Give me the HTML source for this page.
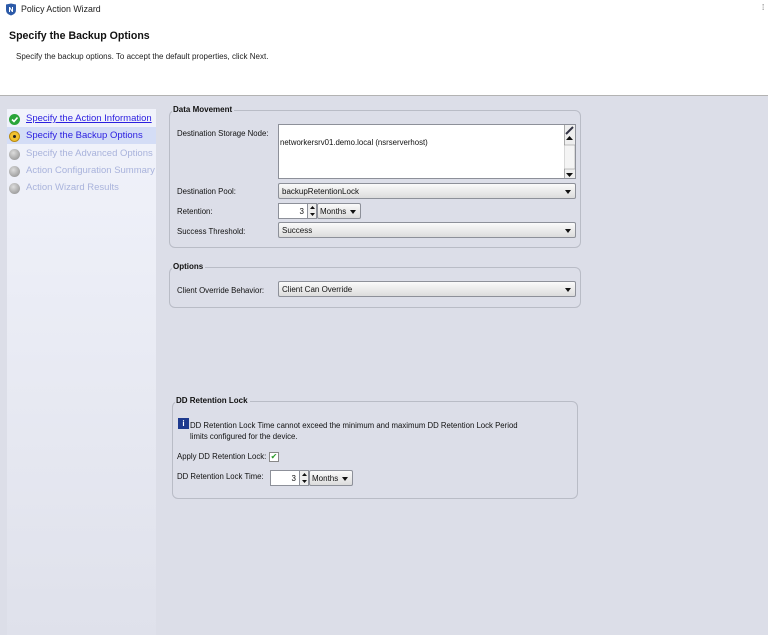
<!DOCTYPE html>
<html><head><style>
*{margin:0;padding:0;box-sizing:border-box}
body{width:768px;height:635px;position:relative;overflow:hidden;background:#dcdee8;font-family:"Liberation Sans",Arial,sans-serif;color:#111}
.a{position:absolute;white-space:nowrap}
.f{font-size:7.8px}
.grp{position:absolute;border:1px solid #b9bcc6;border-radius:6px}
.gt{position:absolute;font-size:8px;font-weight:bold;background:#dcdee8;padding:0 2px 0 1px}
.sel{position:absolute;height:16px;border:1px solid #8d9099;border-radius:2px;background:linear-gradient(#fafafa,#dcdcdc);font-size:8px;padding:3px 0 0 3px}
.sel:after{content:"";position:absolute;right:4px;top:6px;border-left:3.5px solid transparent;border-right:3.5px solid transparent;border-top:4px solid #111}
.inp{position:absolute;height:16px;border:1px solid #8d9099;background:#fff;font-size:8px;text-align:right;padding:3px 12px 0 0}
.spin{position:absolute;right:0;top:0;width:9px;height:14px;border-left:1px solid #8d9099;background:#eee}
.li{position:absolute;left:10px;font-size:9.5px;white-space:nowrap}
.dot{position:absolute;left:-1px;top:1px;width:11px;height:11px;border-radius:50%}
</style></head><body>
<div class="a" style="left:0;top:0;width:768px;height:96px;background:#fff;border-bottom:1px solid #b3b3b3"></div>
<svg class="a" style="left:5px;top:3px" width="12" height="13" viewBox="0 0 12 13"><path d="M1 1.5 L6 0.5 L11 1.5 L11 7 Q11 11 6 12.5 Q1 11 1 7Z" fill="#2c5aa8"/><path d="M4 9V4h1l2 3V4h1v5H7L5 6v3z" fill="#fff"/></svg>
<div class="a" style="left:21px;top:4px;font-size:8.8px;color:#222">Policy Action Wizard</div>
<div class="a" style="left:762px;top:3px;font-size:8px;color:#555">⁞</div>
<div class="a" style="left:9px;top:30px;font-size:10.6px;font-weight:bold">Specify the Backup Options</div>
<div class="a" style="left:16px;top:52px;font-size:8px;color:#222">Specify the backup options. To accept the default properties, click Next.</div>

<div class="a" style="left:7px;top:109px;width:149px;height:526px;background:linear-gradient(#f1f3fb,#dfe1eb)"></div>
<div class="a" style="left:7px;top:127px;width:149px;height:17px;background:#d4ddf6"></div>
<div class="li" style="top:113px;left:10px"><div class="dot" style="background:#2aa53a"></div><svg style="position:absolute;left:-1px;top:1px" width="11" height="11"><path d="M3 5.5l2 2 3.5-4" stroke="#fff" stroke-width="1.6" fill="none"/></svg><span style="margin-left:16px;color:#2a1ee0;text-decoration:underline">Specify the Action Information</span></div>
<div class="li" style="top:130px"><div class="dot" style="background:#f2c230;border:1px solid #b88a10"></div><span style="position:absolute;left:3px;top:5px;width:3px;height:3px;background:#222;border-radius:50%"></span><span style="margin-left:16px;color:#2a1ee0">Specify the Backup Options</span></div>
<div class="li" style="top:148px"><div class="dot" style="background:radial-gradient(circle at 40% 35%,#ddd,#888)"></div><span style="margin-left:16px;color:#a9b3dc">Specify the Advanced Options</span></div>
<div class="li" style="top:165px"><div class="dot" style="background:radial-gradient(circle at 40% 35%,#ddd,#888)"></div><span style="margin-left:16px;color:#a9b3dc">Action Configuration Summary</span></div>
<div class="li" style="top:182px"><div class="dot" style="background:radial-gradient(circle at 40% 35%,#ddd,#888)"></div><span style="margin-left:16px;color:#a9b3dc">Action Wizard Results</span></div>

<div class="grp" style="left:169px;top:110px;width:412px;height:138px"></div>
<div class="gt" style="left:172px;top:105px">Data Movement</div>
<div class="a f" style="left:177px;top:129px">Destination Storage Node:</div>
<div class="a" style="left:278px;top:124px;width:298px;height:55px;border:1px solid #8d9099;background:#fff"></div>
<div class="a f" style="left:280px;top:138px">networkersrv01.demo.local (nsrserverhost)</div>
<div class="a" style="left:564px;top:125px;width:11px;height:53px;background:#eee;border-left:1px solid #aaa"></div>
<svg class="a" style="left:564px;top:125px" width="11" height="53"><path d="M2 9L9 2" stroke="#334" stroke-width="2"/><path d="M2 15h7L5.5 11z" fill="#111"/><rect x="0" y="20" width="11" height="24" fill="#f4f4f4" stroke="#999" stroke-width=".6"/><path d="M2 48h7L5.5 52z" fill="#111"/></svg>
<div class="a f" style="left:177px;top:187px">Destination Pool:</div>
<div class="sel" style="left:278px;top:183px;width:298px">backupRetentionLock</div>
<div class="a f" style="left:177px;top:207px">Retention:</div>
<div class="inp" style="left:278px;top:203px;width:39px">3<div class="spin"><svg width="9" height="14"><path d="M2 5h5L4.5 2z M2 9h5L4.5 12z" fill="#111"/></svg></div></div>
<div class="sel" style="left:317px;top:203px;width:44px;padding-left:2px">Months</div>
<div class="a f" style="left:177px;top:227px">Success Threshold:</div>
<div class="sel" style="left:278px;top:222px;width:298px">Success</div>

<div class="grp" style="left:169px;top:267px;width:412px;height:41px"></div>
<div class="gt" style="left:172px;top:262px">Options</div>
<div class="a f" style="left:177px;top:286px">Client Override Behavior:</div>
<div class="sel" style="left:278px;top:281px;width:298px">Client Can Override</div>

<div class="grp" style="left:172px;top:401px;width:406px;height:98px"></div>
<div class="gt" style="left:175px;top:396px">DD Retention Lock</div>
<div class="a" style="left:178px;top:418px;width:11px;height:11px;background:#1e3a8e;color:#fff;font-size:8px;font-weight:bold;text-align:center;line-height:11px">i</div>
<div class="a f" style="left:190px;top:421px">DD Retention Lock Time cannot exceed the minimum and maximum DD Retention Lock Period</div>
<div class="a f" style="left:190px;top:432px">limits configured for the device.</div>
<div class="a f" style="left:177px;top:452px">Apply DD Retention Lock:</div>
<div class="a" style="left:269px;top:452px;width:10px;height:10px;border:1px solid #888;background:#fff;color:#2a9a2a;font-size:8px;line-height:8px;text-align:center">✔</div>
<div class="a f" style="left:177px;top:472px">DD Retention Lock Time:</div>
<div class="inp" style="left:270px;top:470px;width:39px">3<div class="spin"><svg width="9" height="14"><path d="M2 5h5L4.5 2z M2 9h5L4.5 12z" fill="#111"/></svg></div></div>
<div class="sel" style="left:309px;top:470px;width:44px;padding-left:2px">Months</div>
</body></html>
